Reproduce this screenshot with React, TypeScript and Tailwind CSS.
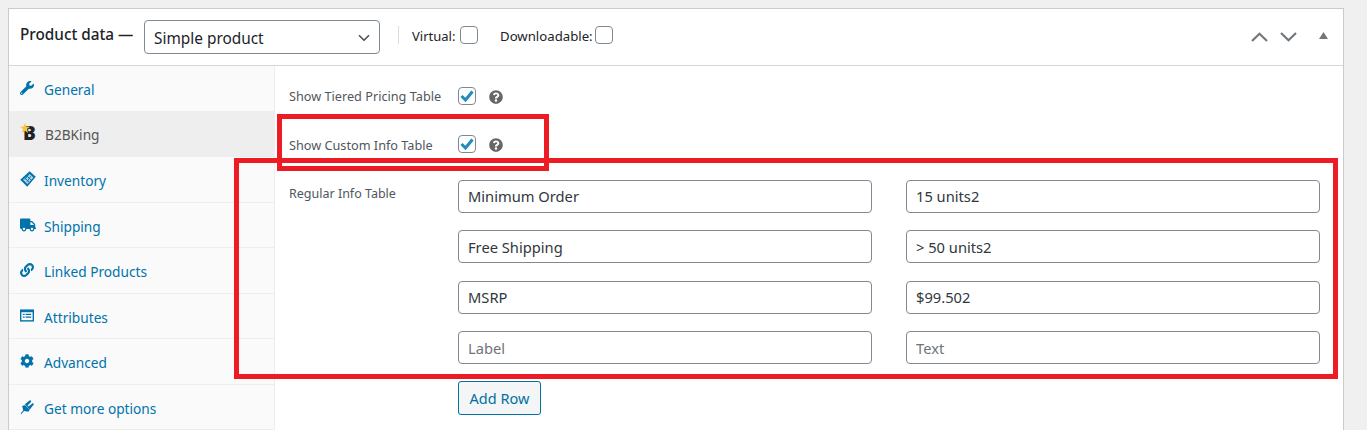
import { FaWrench, FaTruck, FaLink, FaCog, FaQuestionCircle } from 'react-icons/fa';
import { ChevronDown } from 'lucide-react';
import type { ReactNode } from 'react';

function InventoryIcon() {
    return (
        <svg width="16" height="16" viewBox="0 0 15 15" className="text-[#0073aa]">
            <path d="M9 .2 14.800 5.500 6.800 14.800 .2 8.200Z" fill="currentColor" />
            <path d="M9 2.800 12.500 6 7 12.300 2.800 8.200Z" fill="#b5d5e5" />
            <path d="M6.500 4.500 10.500 8.500M4.500 6.500 8.500 10.500M8 3.500 4.500 8M10 5 6.500 10" stroke="currentColor" strokeWidth=".9" />
        </svg>
    );
}

function AttributesIcon() {
    return (
        <svg width="14" height="13" viewBox="0 0 15 13" className="text-[#0073aa]">
            <path d="M0 0h15v13H0Z" fill="currentColor" />
            <path d="M1.500 3h12v8.500h-12Z" fill="#fff" />
            <path d="M3 4.500h2v1.500H3ZM6 4.500h6v1.500H6ZM3 7.500h2V9H3ZM6 7.500h6V9H6Z" fill="currentColor" />
        </svg>
    );
}

function PluginIcon() {
    return (
        <svg width="15" height="15" viewBox="0 0 14 14" className="text-[#0073aa]">
            <path d="M.5 13.500 3 10.800 2 6.500 4.500 5.500 9 10 7.800 12 3.800 11.300 1.300 14Z" fill="currentColor" />
            <path d="M4.500 5 9.500 1 10.500 2.500 7 6 8 7 12 3.800 13 5 9 10Z" fill="currentColor" />
        </svg>
    );
}

function B2BIcon() {
    return (
        <span className="relative flex h-[18px] w-[18px] items-center">
            <span className="relative pl-[3px] font-['Open_Sans',sans-serif] text-[19px] leading-none font-extrabold text-[#222]">B</span>
            <svg width="10" height="10" viewBox="0 0 10 10" className="absolute top-[-2px] left-0 text-[#f5c542]">
                <path d="M5 0 6.200 3.600 10 3.800 7 6 8.100 10 5 7.700 1.900 10 3 6 0 3.800 3.800 3.600Z" fill="currentColor" />
            </svg>
        </span>
    );
}

const TABS: { label: string; icon: ReactNode; active?: boolean }[] = [
    { label: 'General', icon: <FaWrench className="text-[14px] text-[#0073aa]" /> },
    { label: 'B2BKing', icon: <B2BIcon />, active: true },
    { label: 'Inventory', icon: <InventoryIcon /> },
    { label: 'Shipping', icon: <FaTruck className="text-[16px] text-[#0073aa]" /> },
    { label: 'Linked Products', icon: <FaLink className="text-[14px] text-[#0073aa]" /> },
    { label: 'Attributes', icon: <AttributesIcon /> },
    { label: 'Advanced', icon: <FaCog className="text-[14px] text-[#0073aa]" /> },
    { label: 'Get more options', icon: <PluginIcon /> },
];

const INFO_ROWS = [
    ['Minimum Order', '15 units2'],
    ['Free Shipping', '> 50 units2'],
    ['MSRP', '$99.502'],
    ['', ''],
];

function Checkbox({ checked }: { checked?: boolean }) {
    return (
        <span className="flex h-[18px] w-[18px] shrink-0 items-center justify-center rounded-[4px] border border-[#7e8993] bg-white">
            {checked && (
                <svg width="14" height="12" viewBox="0 0 14 12" fill="none" stroke="#1e8cbe" strokeWidth="3">
                    <path d="M1.500 6 5.500 10 12.500 1.500" />
                </svg>
            )}
        </span>
    );
}

function ToggleRow({ label, className, labelClass, helpClass }: { label: string; className: string; labelClass: string; helpClass: string }) {
    return (
        <div className={`flex items-center ${className}`}>
            <span className={`w-[169px] text-[12.700px] text-[#50575e] ${labelClass}`}>{label}</span>
            <Checkbox checked />
            <FaQuestionCircle className={`ml-[13px] text-[14px] text-[#666] ${helpClass}`} />
        </div>
    );
}

export default function App() {
    return (
        <div className="h-[430px] overflow-hidden bg-[#f0f0f1] pt-[8px] pr-[23px] pl-[8px] font-['Noto_Sans',sans-serif]">
            <div className="h-[440px] border border-[#c9cbcf] bg-white">
                {/* Header */}
                <div className="flex h-[57px] items-center border-b border-[#d5d6d8] pr-[15px] pl-[11px] text-[#1d2327]">
                    <span className="mb-[6px] w-[124px] text-[15.300px] font-medium whitespace-nowrap">Product data —</span>
                    <div className="mb-[1px] flex h-[34px] w-[236px] items-center justify-between rounded-[4px] border border-[#7e8993] pr-[6px] pl-[9px] text-[15.400px]">
                        <span className="pt-[5px]">Simple product</span>
                        <ChevronDown size={18} strokeWidth={2.300} className="mt-[2px] text-[#50575e]" />
                    </div>
                    <span className="mr-[13px] mb-[4px] ml-[18px] h-[18px] w-px bg-[#dcdcde]" />
                    <div className="mb-[4px] flex items-center">
                        <span className="w-[48px] pt-[3px] text-[13px]">Virtual:</span>
                        <Checkbox />
                        <span className="ml-[22px] w-[95px] pt-[3px] text-[13.200px]">Downloadable:</span>
                        <Checkbox />
                    </div>
                    <div className="mb-[1px] ml-auto flex items-center text-[#72777c]">
                        <svg width="17" height="10" viewBox="0 0 17 10" fill="none" stroke="currentColor" strokeWidth="2.200">
                            <path d="M1 9 8.500 1.800 16 9" />
                        </svg>
                        <svg width="17" height="10" viewBox="0 0 17 10" fill="none" stroke="currentColor" strokeWidth="2.200" className="ml-[12px]">
                            <path d="M1 1 8.500 8.200 16 1" />
                        </svg>
                        <svg width="9" height="7" viewBox="0 0 9 7" fill="currentColor" className="mb-[2px] ml-[22px]">
                            <path d="M4.500 0 9 7H0Z" />
                        </svg>
                    </div>
                </div>

                <div className="flex">
                    {/* Tabs */}
                    <ul className="w-[266px] shrink-0 border-r border-[#eeeeee] bg-[#fafafa]">
                        {TABS.map((tab) => (
                            <li
                                key={tab.label}
                                className={`flex h-[45.500px] items-center border-b border-[#eeeeee] pl-[11px] text-[13.700px] ${tab.active ? 'bg-[#eeeeee] text-[#555]' : 'text-[#0073aa]'}`}
                            >
                                <span className="flex w-[24px] items-center">{tab.icon}</span>
                                <span className={tab.active ? 'pt-[3px] pl-[1px]' : 'pt-[5px]'}>{tab.label}</span>
                            </li>
                        ))}
                    </ul>

                    {/* Panel */}
                    <div className="flex-1 pt-[21px] pl-[14px]">
                        <ToggleRow label="Show Tiered Pricing Table" className="h-[18px]" labelClass="pt-[1px]" helpClass="mt-[1px]" />
                        <ToggleRow label="Show Custom Info Table" className="mt-[30px] h-[18px]" labelClass="pt-[3px]" helpClass="mt-[2px]" />
                        <div className="mt-[26.500px] flex">
                            <span className="w-[169px] text-[12.500px] leading-[28px] text-[#50575e]">Regular Info Table</span>
                            <div>
                                <div className="grid grid-cols-[414px_414px] gap-x-[34px] gap-y-[17.500px]">
                                    {INFO_ROWS.map(([label, text], i) => [
                                        <input key={`l${i}`} readOnly value={label} placeholder="Label" className="h-[33px] rounded-[4px] border border-[#7e8993] px-[9px] text-[14.700px] text-[#32373c] placeholder:text-[#6f7479]" />,
                                        <input key={`t${i}`} readOnly value={text} placeholder="Text" className="h-[33px] rounded-[4px] border border-[#7e8993] px-[9px] text-[14.700px] text-[#32373c] placeholder:text-[#6f7479]" />,
                                    ])}
                                </div>
                                <button className="mt-[17px] h-[34px] w-[83px] rounded-[3px] border border-[#0071a1] bg-[#f3f5f6] pt-[1px] text-[14.500px] text-[#0071a1]">Add Row</button>
                            </div>
                        </div>
                    </div>
                </div>
            </div>

            {/* Red annotation boxes */}
            <div className="absolute top-[114px] left-[277px] h-[57px] w-[272px] border-[5px] border-[#ed1c24]" />
            <div className="absolute top-[158px] left-[234px] h-[221px] w-[1104px] border-[5px] border-[#ed1c24]" />
        </div>
    );
}
